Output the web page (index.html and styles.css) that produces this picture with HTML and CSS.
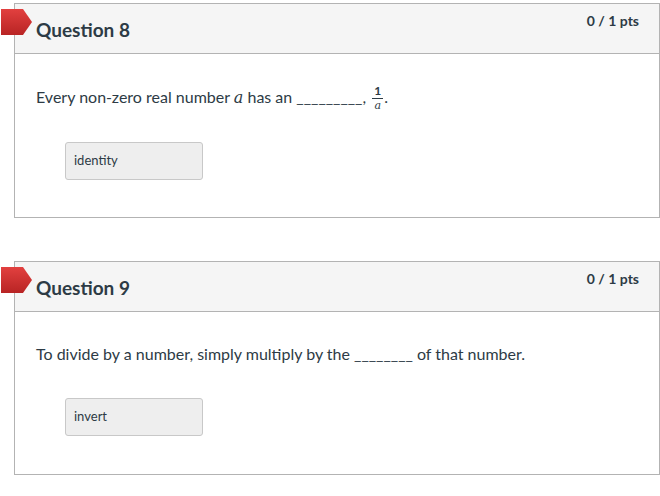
FILE: index.html
```html
<!DOCTYPE html>
<html>
<head>
<meta charset="utf-8">
<link rel="stylesheet" href="styles.css">
</head>
<body>
<div class="quiz">
  <div class="card">
    <div class="flag"></div>
    <div class="card-head">
      <h2 class="title">Question 8</h2>
      <span class="pts">0 / 1 pts</span>
    </div>
    <div class="card-body">
      <p class="text">Every non-zero real number <span class="mi">a</span> has an <span class="blank">_________</span>, <span class="frac"><span class="num">1</span><span class="den mi">a</span></span>.</p>
      <div class="answer answer-tall">identity</div>
    </div>
  </div>
  <div class="card">
    <div class="flag"></div>
    <div class="card-head">
      <h2 class="title">Question 9</h2>
      <span class="pts">0 / 1 pts</span>
    </div>
    <div class="card-body card-body-short">
      <p class="text">To divide by a number, simply multiply by the <span class="blank">________</span> of that number.</p>
      <div class="answer">invert</div>
    </div>
  </div>
</div>
</body>
</html>
```
FILE: styles.css
```css
html, body {
  margin: 0;
  padding: 0;
  background: #ffffff;
}
body {
  font-family: Lato, "Open Sans", sans-serif;
  color: #2d3b45;
}
.quiz {
  padding: 3px 0 0 14px;
  display: flex;
  flex-direction: column;
  gap: 43px;
}
.card {
  position: relative;
  width: 646px;
  box-sizing: border-box;
  border: 1px solid #b3b3b3;
}
.flag {
  position: absolute;
  left: -14px;
  top: 5px;
  width: 31px;
  height: 26px;
  background: linear-gradient(#e2403f, #b82424);
  clip-path: polygon(0 0, 22px 0, 31px 13px, 22px 26px, 0 26px);
}
.card-head {
  height: 49px;
  background: #f5f5f5;
  border-bottom: 1px solid #b3b3b3;
  display: flex;
  justify-content: space-between;
  align-items: flex-start;
  padding: 0 20px 0 21px;
}
.title {
  margin: 14px 0 0;
  font-size: 19px;
  font-weight: 700;
  line-height: 24px;
}
.pts {
  margin-top: 7px;
  font-size: 14px;
  font-weight: 700;
  line-height: 20px;
}
.card-body {
  height: 163px;
  box-sizing: border-box;
  padding: 31px 21px 0;
}
.card-body-short {
  height: 162px;
}
.text {
  margin: 0;
  font-size: 16px;
  line-height: 22px;
  height: 22px;
}
.mi {
  font-family: "DejaVu Serif", "Liberation Serif", serif;
  font-style: italic;
  font-size: 16px;
}
.blank {
  color: #3d4a54;
}
.frac {
  display: inline-flex;
  flex-direction: column;
  align-items: center;
  vertical-align: 8px;
  margin: 0 1px 0 2px;
}
.num {
  font-size: 12px;
  line-height: 12px;
  font-weight: 700;
  padding: 0 2px 1px;
  border-bottom: 1px solid #2d3b45;
}
.den {
  font-size: 11px;
  line-height: 11px;
  padding-top: 1px;
}
.answer {
  margin: 33px 0 0 29px;
  width: 138px;
  height: 38px;
  box-sizing: border-box;
  background: #eeeeee;
  border: 1px solid #c8c8c8;
  border-radius: 3px;
  font-size: 13px;
  line-height: 34px;
  padding: 0 8px;
}
.answer-tall {
  margin-top: 35px;
}
```
